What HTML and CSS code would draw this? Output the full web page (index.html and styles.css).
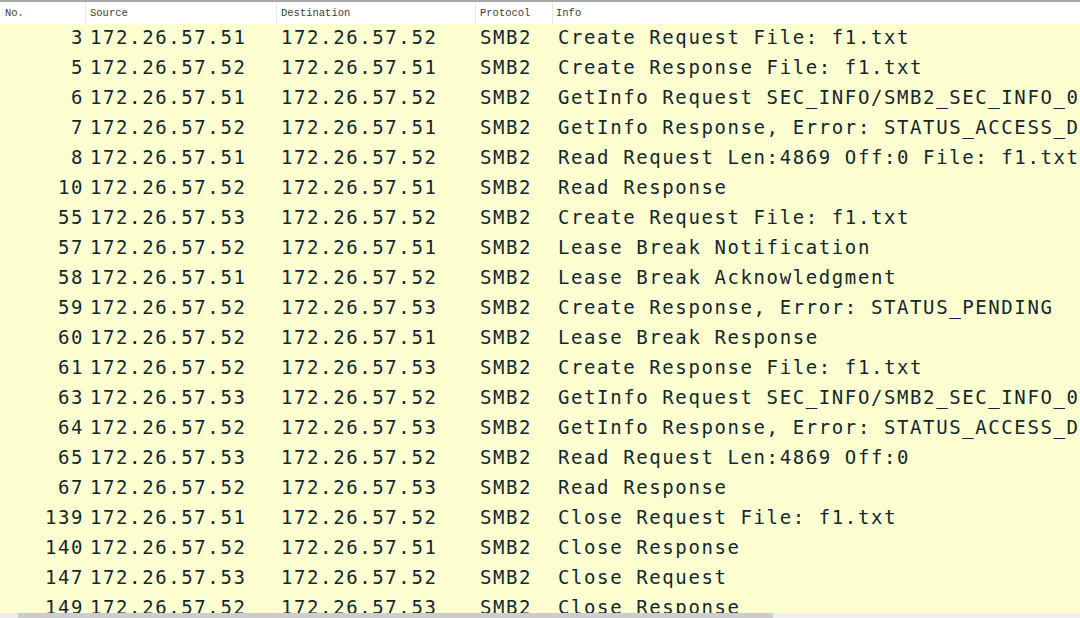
FILE: index.html
```html
<!DOCTYPE html>
<html>
<head>
<meta charset="utf-8">
<link rel="stylesheet" href="styles.css">
</head>
<body>
<div class="app">
  <div class="topline"></div>
  <div class="header">
    <div class="hcell">No.</div>
    <div class="hcell">Source</div>
    <div class="hcell">Destination</div>
    <div class="hcell">Protocol</div>
    <div class="hcell last">Info</div>
  </div>
  <div class="rows">
    <div class="row"><div class="no">3</div><div class="c">172.26.57.51</div><div class="c">172.26.57.52</div><div class="c">SMB2</div><div class="c info">Create Request File: f1.txt</div></div>
    <div class="row"><div class="no">5</div><div class="c">172.26.57.52</div><div class="c">172.26.57.51</div><div class="c">SMB2</div><div class="c info">Create Response File: f1.txt</div></div>
    <div class="row"><div class="no">6</div><div class="c">172.26.57.51</div><div class="c">172.26.57.52</div><div class="c">SMB2</div><div class="c info">GetInfo Request SEC_INFO/SMB2_SEC_INFO_00 File: f1.txt</div></div>
    <div class="row"><div class="no">7</div><div class="c">172.26.57.52</div><div class="c">172.26.57.51</div><div class="c">SMB2</div><div class="c info">GetInfo Response, Error: STATUS_ACCESS_DENIED</div></div>
    <div class="row"><div class="no">8</div><div class="c">172.26.57.51</div><div class="c">172.26.57.52</div><div class="c">SMB2</div><div class="c info">Read Request Len:4869 Off:0 File: f1.txt</div></div>
    <div class="row"><div class="no">10</div><div class="c">172.26.57.52</div><div class="c">172.26.57.51</div><div class="c">SMB2</div><div class="c info">Read Response</div></div>
    <div class="row"><div class="no">55</div><div class="c">172.26.57.53</div><div class="c">172.26.57.52</div><div class="c">SMB2</div><div class="c info">Create Request File: f1.txt</div></div>
    <div class="row"><div class="no">57</div><div class="c">172.26.57.52</div><div class="c">172.26.57.51</div><div class="c">SMB2</div><div class="c info">Lease Break Notification</div></div>
    <div class="row"><div class="no">58</div><div class="c">172.26.57.51</div><div class="c">172.26.57.52</div><div class="c">SMB2</div><div class="c info">Lease Break Acknowledgment</div></div>
    <div class="row"><div class="no">59</div><div class="c">172.26.57.52</div><div class="c">172.26.57.53</div><div class="c">SMB2</div><div class="c info">Create Response, Error: STATUS_PENDING</div></div>
    <div class="row"><div class="no">60</div><div class="c">172.26.57.52</div><div class="c">172.26.57.51</div><div class="c">SMB2</div><div class="c info">Lease Break Response</div></div>
    <div class="row"><div class="no">61</div><div class="c">172.26.57.52</div><div class="c">172.26.57.53</div><div class="c">SMB2</div><div class="c info">Create Response File: f1.txt</div></div>
    <div class="row"><div class="no">63</div><div class="c">172.26.57.53</div><div class="c">172.26.57.52</div><div class="c">SMB2</div><div class="c info">GetInfo Request SEC_INFO/SMB2_SEC_INFO_00 File: f1.txt</div></div>
    <div class="row"><div class="no">64</div><div class="c">172.26.57.52</div><div class="c">172.26.57.53</div><div class="c">SMB2</div><div class="c info">GetInfo Response, Error: STATUS_ACCESS_DENIED</div></div>
    <div class="row"><div class="no">65</div><div class="c">172.26.57.53</div><div class="c">172.26.57.52</div><div class="c">SMB2</div><div class="c info">Read Request Len:4869 Off:0</div></div>
    <div class="row"><div class="no">67</div><div class="c">172.26.57.52</div><div class="c">172.26.57.53</div><div class="c">SMB2</div><div class="c info">Read Response</div></div>
    <div class="row"><div class="no">139</div><div class="c">172.26.57.51</div><div class="c">172.26.57.52</div><div class="c">SMB2</div><div class="c info">Close Request File: f1.txt</div></div>
    <div class="row"><div class="no">140</div><div class="c">172.26.57.52</div><div class="c">172.26.57.51</div><div class="c">SMB2</div><div class="c info">Close Response</div></div>
    <div class="row"><div class="no">147</div><div class="c">172.26.57.53</div><div class="c">172.26.57.52</div><div class="c">SMB2</div><div class="c info">Close Request</div></div>
    <div class="row"><div class="no">149</div><div class="c">172.26.57.52</div><div class="c">172.26.57.53</div><div class="c">SMB2</div><div class="c info">Close Response</div></div>
  </div>
  <div class="hscroll">
    <div class="hs-left"></div>
    <div class="hs-thumb"></div>
    <div class="hs-track"></div>
  </div>
</div>
</body>
</html>
```

FILE: styles.css
```css
html, body {
  margin: 0;
  padding: 0;
  background: #ffffff;
}
.app {
  width: 1080px;
  height: 618px;
  display: flex;
  flex-direction: column;
  overflow: hidden;
}
.topline {
  height: 2px;
  background: #a9a9a9;
  flex: none;
}
.header {
  height: 22px;
  flex: none;
  display: grid;
  grid-template-columns: 86px 191px 199px 77px 1fr;
  background: #ffffff;
}
.hcell {
  border-right: 1px solid #e8e8e8;
  font-family: "Liberation Mono", monospace;
  font-size: 10.5px;
  color: #3c3c3c;
  padding-left: 4px;
  line-height: 23px;
  white-space: nowrap;
  overflow: hidden;
}
.hcell:first-child { padding-left: 5px; }
.hcell.last { border-right: none; padding-left: 3px; }
.rows {
  flex: 1;
  overflow: hidden;
  background: #feffd0;
}
.row {
  height: 30px;
  display: grid;
  grid-template-columns: 86px 191px 199px 77px 1fr;
  background: #feffd0;
  font-family: "DejaVu Sans Mono", monospace;
  font-size: 19px;
  letter-spacing: 1.6px;
  color: #12272e;
  line-height: 27px;
  white-space: nowrap;
}
.no {
  text-align: right;
  padding-right: 2px;
  overflow: hidden;
}
.c {
  padding-left: 4px;
  overflow: hidden;
}
.c.info { padding-left: 5px; }
.hscroll {
  height: 5px;
  flex: none;
  display: flex;
}
.hs-left { width: 18px; background: #ececec; }
.hs-thumb { width: 755px; background: #cdcdcd; }
.hs-track { flex: 1; background: #f0f0f0; }
```
